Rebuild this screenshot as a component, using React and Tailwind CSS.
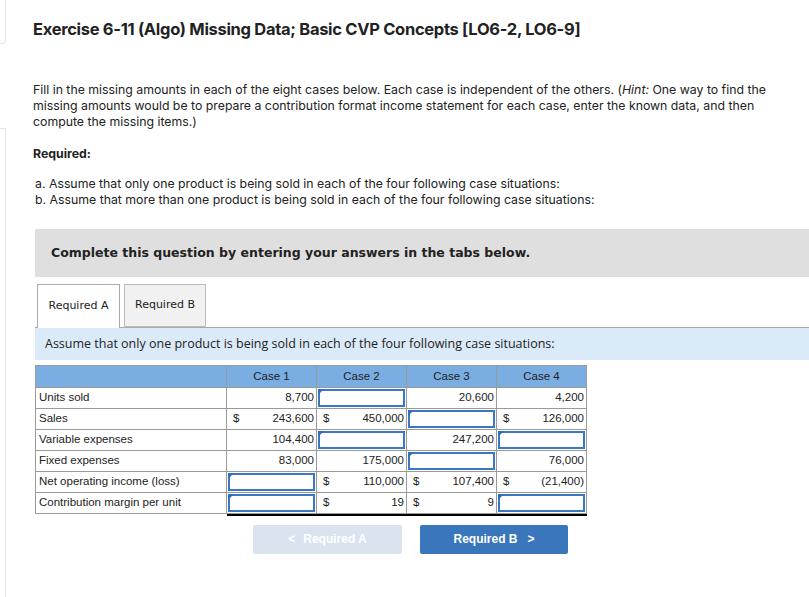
import React from 'react';

const rows = [
  { label: 'Units sold', cells: [{ v: '8,700' }, { input: true }, { v: '20,600' }, { v: '4,200' }] },
  { label: 'Sales', cells: [{ d: 1, v: '243,600' }, { d: 1, v: '450,000' }, { input: true }, { d: 1, v: '126,000' }] },
  { label: 'Variable expenses', cells: [{ v: '104,400' }, { input: true }, { v: '247,200' }, { input: true }] },
  { label: 'Fixed expenses', cells: [{ v: '83,000' }, { v: '175,000' }, { input: true }, { v: '76,000' }] },
  { label: 'Net operating income (loss)', cells: [{ input: true }, { d: 1, v: '110,000' }, { d: 1, v: '107,400' }, { d: 1, v: '(21,400)' }] },
  { label: 'Contribution margin per unit', cells: [{ input: true }, { d: 1, v: '19' }, { d: 1, v: '9' }, { input: true }] },
];

function Cell({ c }) {
  if (c.input) {
    return (
      <td className="relative border border-[#9a9a9a] p-0 h-[21px]">
        <div className="absolute inset-[1px] border-2 border-[#3b78c4] bg-white" />
        <div className="absolute left-[1px] top-[1px] w-0 h-0 border-t-[6px] border-r-[6px] border-t-[#2f6fc0] border-r-transparent" />
      </td>
    );
  }
  return (
    <td className="border border-[#9a9a9a] px-[2px] h-[21px]">
      <div className="flex justify-between">
        <span className="pl-[4px]">{c.d ? '$' : ''}</span>
        <span>{c.v}</span>
      </div>
    </td>
  );
}

export default function App() {
  return (
    <div className="relative w-[809px] h-[597px] bg-white overflow-hidden text-[#222]" style={{ fontFamily: 'Inter, "Liberation Sans", sans-serif' }}>
      <div className="absolute left-[-4px] top-[-4px] w-[10px] h-[48px] border border-[#e4e4e4] rounded" />
      <div className="absolute left-[-4px] top-[128px] w-[10px] h-[500px] border-l-0 border border-[#e4e4e4]" />
      <div className="pl-[33px] pt-[18px]">
        <h1 className="text-[16.5px] leading-[22px] font-bold tracking-[-0.3px] text-[#222]">Exercise 6-11 (Algo) Missing Data; Basic CVP Concepts [LO6-2, LO6-9]</h1>
        <p className="mt-[42px] text-[12.3px] leading-[16px] pr-[30px]">
          Fill in the missing amounts in each of the eight cases below. Each case is independent of the others. (<i>Hint:</i> One way to find the missing amounts would be to prepare a contribution format income statement for each case, enter the known data, and then compute the missing items.)
        </p>
        <p className="mt-[16px] text-[12.3px] leading-[16px] font-bold">Required:</p>
        <div className="mt-[14px] pl-[2px] text-[12.3px] leading-[16px]">
          <p>a. Assume that only one product is being sold in each of the four following case situations:</p>
          <p>b. Assume that more than one product is being sold in each of the four following case situations:</p>
        </div>
      </div>
      <div className="ml-[35px] mt-[21px] h-[48px] bg-[#dfdfdf] flex items-center pl-[16px] font-bold" style={{ fontFamily: '"DejaVu Sans", sans-serif', fontSize: '12.5px' }}>
        Complete this question by entering your answers in the tabs below.
      </div>
      <div className="ml-[35px] mt-[6px] flex gap-[4px] items-end pl-[2px] text-[11px]" style={{ fontFamily: '"DejaVu Sans", sans-serif' }}>
        <div className="w-[83px] h-[44px] border border-b-0 border-[#aaa] bg-white flex items-center justify-center relative top-[1px]">Required A</div>
        <div className="w-[82px] h-[43px] border border-[#bbb] bg-[#f1f1f1] flex items-center justify-center">Required B</div>
      </div>
      <div className="ml-[35px] h-[33px] bg-[#dbeaf8] border-t border-[#aaa] flex items-center pl-[10px] text-[12.5px]" style={{ fontFamily: '"Open Sans", sans-serif' }}>
        Assume that only one product is being sold in each of the four following case situations:
      </div>
      <table className="ml-[35px] mt-[5px] border-collapse text-[11.5px]" style={{ fontFamily: '"Liberation Sans", Arial, sans-serif' }}>
        <thead>
          <tr className="bg-[#7aaee3] h-[22px]">
            <th className="w-[191px] border border-[#9a9a9a]" />
            {['Case 1', 'Case 2', 'Case 3', 'Case 4'].map((h) => (
              <th key={h} className="w-[90px] border border-[#9a9a9a] font-normal">{h}</th>
            ))}
          </tr>
        </thead>
        <tbody>
          {rows.map((r) => (
            <tr key={r.label}>
              <td className="border border-[#9a9a9a] px-[3px] h-[21px]">{r.label}</td>
              {r.cells.map((c, i) => <Cell key={i} c={c} />)}
            </tr>
          ))}
          <tr>
            <td />
            <td colSpan={4} className="h-[2px] bg-black p-0" />
          </tr>
        </tbody>
      </table>
      <div className="flex mt-[9px] ml-[253px] gap-[18px] text-[12px] font-bold" style={{ fontFamily: '"Liberation Sans", Arial, sans-serif' }}>
        <div className="w-[149px] h-[29px] bg-[#dae4f0] text-white rounded-[2px] flex items-center justify-center gap-[8px]"><span>&lt;</span>Required A</div>
        <div className="w-[148px] h-[29px] bg-[#3a76bb] text-white rounded-[2px] flex items-center justify-center gap-[10px]">Required B<span>&gt;</span></div>
      </div>
    </div>
  );
}
